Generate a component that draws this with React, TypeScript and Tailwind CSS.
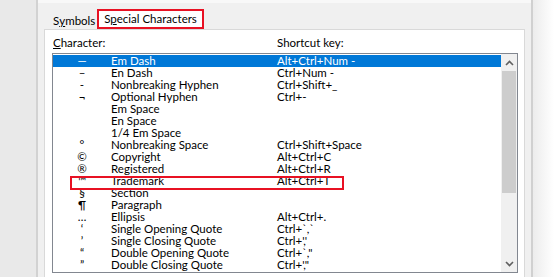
import React from "react";

const rows: [string, string, string][] = [
  ["—", "Em Dash", "Alt+Ctrl+Num -"],
  ["–", "En Dash", "Ctrl+Num -"],
  ["‑", "Nonbreaking Hyphen", "Ctrl+Shift+_"],
  ["¬", "Optional Hyphen", "Ctrl+-"],
  ["", "Em Space", ""],
  ["", "En Space", ""],
  ["", "1/4 Em Space", ""],
  ["°", "Nonbreaking Space", "Ctrl+Shift+Space"],
  ["©", "Copyright", "Alt+Ctrl+C"],
  ["®", "Registered", "Alt+Ctrl+R"],
  ["™", "Trademark", "Alt+Ctrl+T"],
  ["§", "Section", ""],
  ["¶", "Paragraph", ""],
  ["…", "Ellipsis", "Alt+Ctrl+."],
  ["‘", "Single Opening Quote", "Ctrl+`,`"],
  ["’", "Single Closing Quote", "Ctrl+','"],
  ["“", "Double Opening Quote", "Ctrl+`,\""],
  ["”", "Double Closing Quote", "Ctrl+',\""],
];

export default function App() {
  return (
    <div
      className="flex h-[277px] w-[554px] overflow-hidden bg-white text-[11.5px] text-[#000]"
      style={{ fontFamily: 'Lato, "Noto Sans", sans-serif' }}
    >
      <div className="w-[38px] shrink-0 border-r-2 border-[#d2d2d2] bg-[#e9e9e9]" />
      <div className="flex w-[495px] shrink-0 flex-col border-r-2 border-[#d0d0d0] bg-[#f0f0f0]">
        <div className="h-[3px] bg-[#f8f8f8]" />
        {/* tabs */}
        <div className="relative ml-[6px] flex h-[26px] items-end">
          <div className="flex h-[17px] w-[53px] items-center pl-[9px] leading-none">
            S<span className="underline">y</span>mbols
          </div>
          <div className="relative flex h-[20px] w-[107px] items-center justify-center bg-white leading-none">
            <span>
              S<span className="underline">p</span>ecial Characters
            </span>
            <div className="pointer-events-none absolute left-0 top-0 h-[20px] w-[107px] border-2 border-[#e81123]" />
          </div>
        </div>
        {/* pane */}
        <div className="ml-[6px] mr-[6px] flex flex-1 flex-col border border-b-0 border-[#d9d9d9] bg-white pl-[7px] pr-[6px]">
          <div className="flex h-[23px] items-center pt-[3px] leading-none">
            <div className="w-[225px] pl-[1px]">
              <span className="underline">C</span>haracter:
            </div>
            <div>Shortcut key:</div>
          </div>
          <div className="relative flex h-[220px] border border-[#828790] bg-white">
            <div className="flex-1 pt-[1px]">
              {rows.map(([c, n, s], i) => (
                <div
                  key={n}
                  className={
                    "flex h-[12px] items-center leading-[12px] " +
                    (i === 0 ? "bg-[#0078d7] text-white" : "")
                  }
                >
                  <div className="w-[58px] text-center">{c}</div>
                  <div className="w-[166px] whitespace-nowrap">{n}</div>
                  <div className="whitespace-nowrap">{s}</div>
                </div>
              ))}
            </div>
            {/* scrollbar */}
            <div className="flex w-[16px] flex-col bg-[#f0f0f0]">
              <div className="flex h-[17px] items-center justify-center">
                <svg width="9" height="6" viewBox="0 0 9 6">
                  <path d="M1 5 L4.5 1.5 L8 5" fill="none" stroke="#606060" strokeWidth="1.6" />
                </svg>
              </div>
              <div className="mx-[1px] h-[122px] bg-[#cdcdcd]" />
              <div className="flex-1" />
              <div className="flex h-[17px] items-center justify-center">
                <svg width="9" height="6" viewBox="0 0 9 6">
                  <path d="M1 1 L4.5 4.5 L8 1" fill="none" stroke="#606060" strokeWidth="1.6" />
                </svg>
              </div>
            </div>
            <div className="pointer-events-none absolute left-[17px] top-[122px] h-[14px] w-[274px] border-2 border-[#e81123]" />
          </div>
        </div>
      </div>
      <div className="flex-1 bg-gradient-to-r from-[#ececec] to-white" />
    </div>
  );
}
